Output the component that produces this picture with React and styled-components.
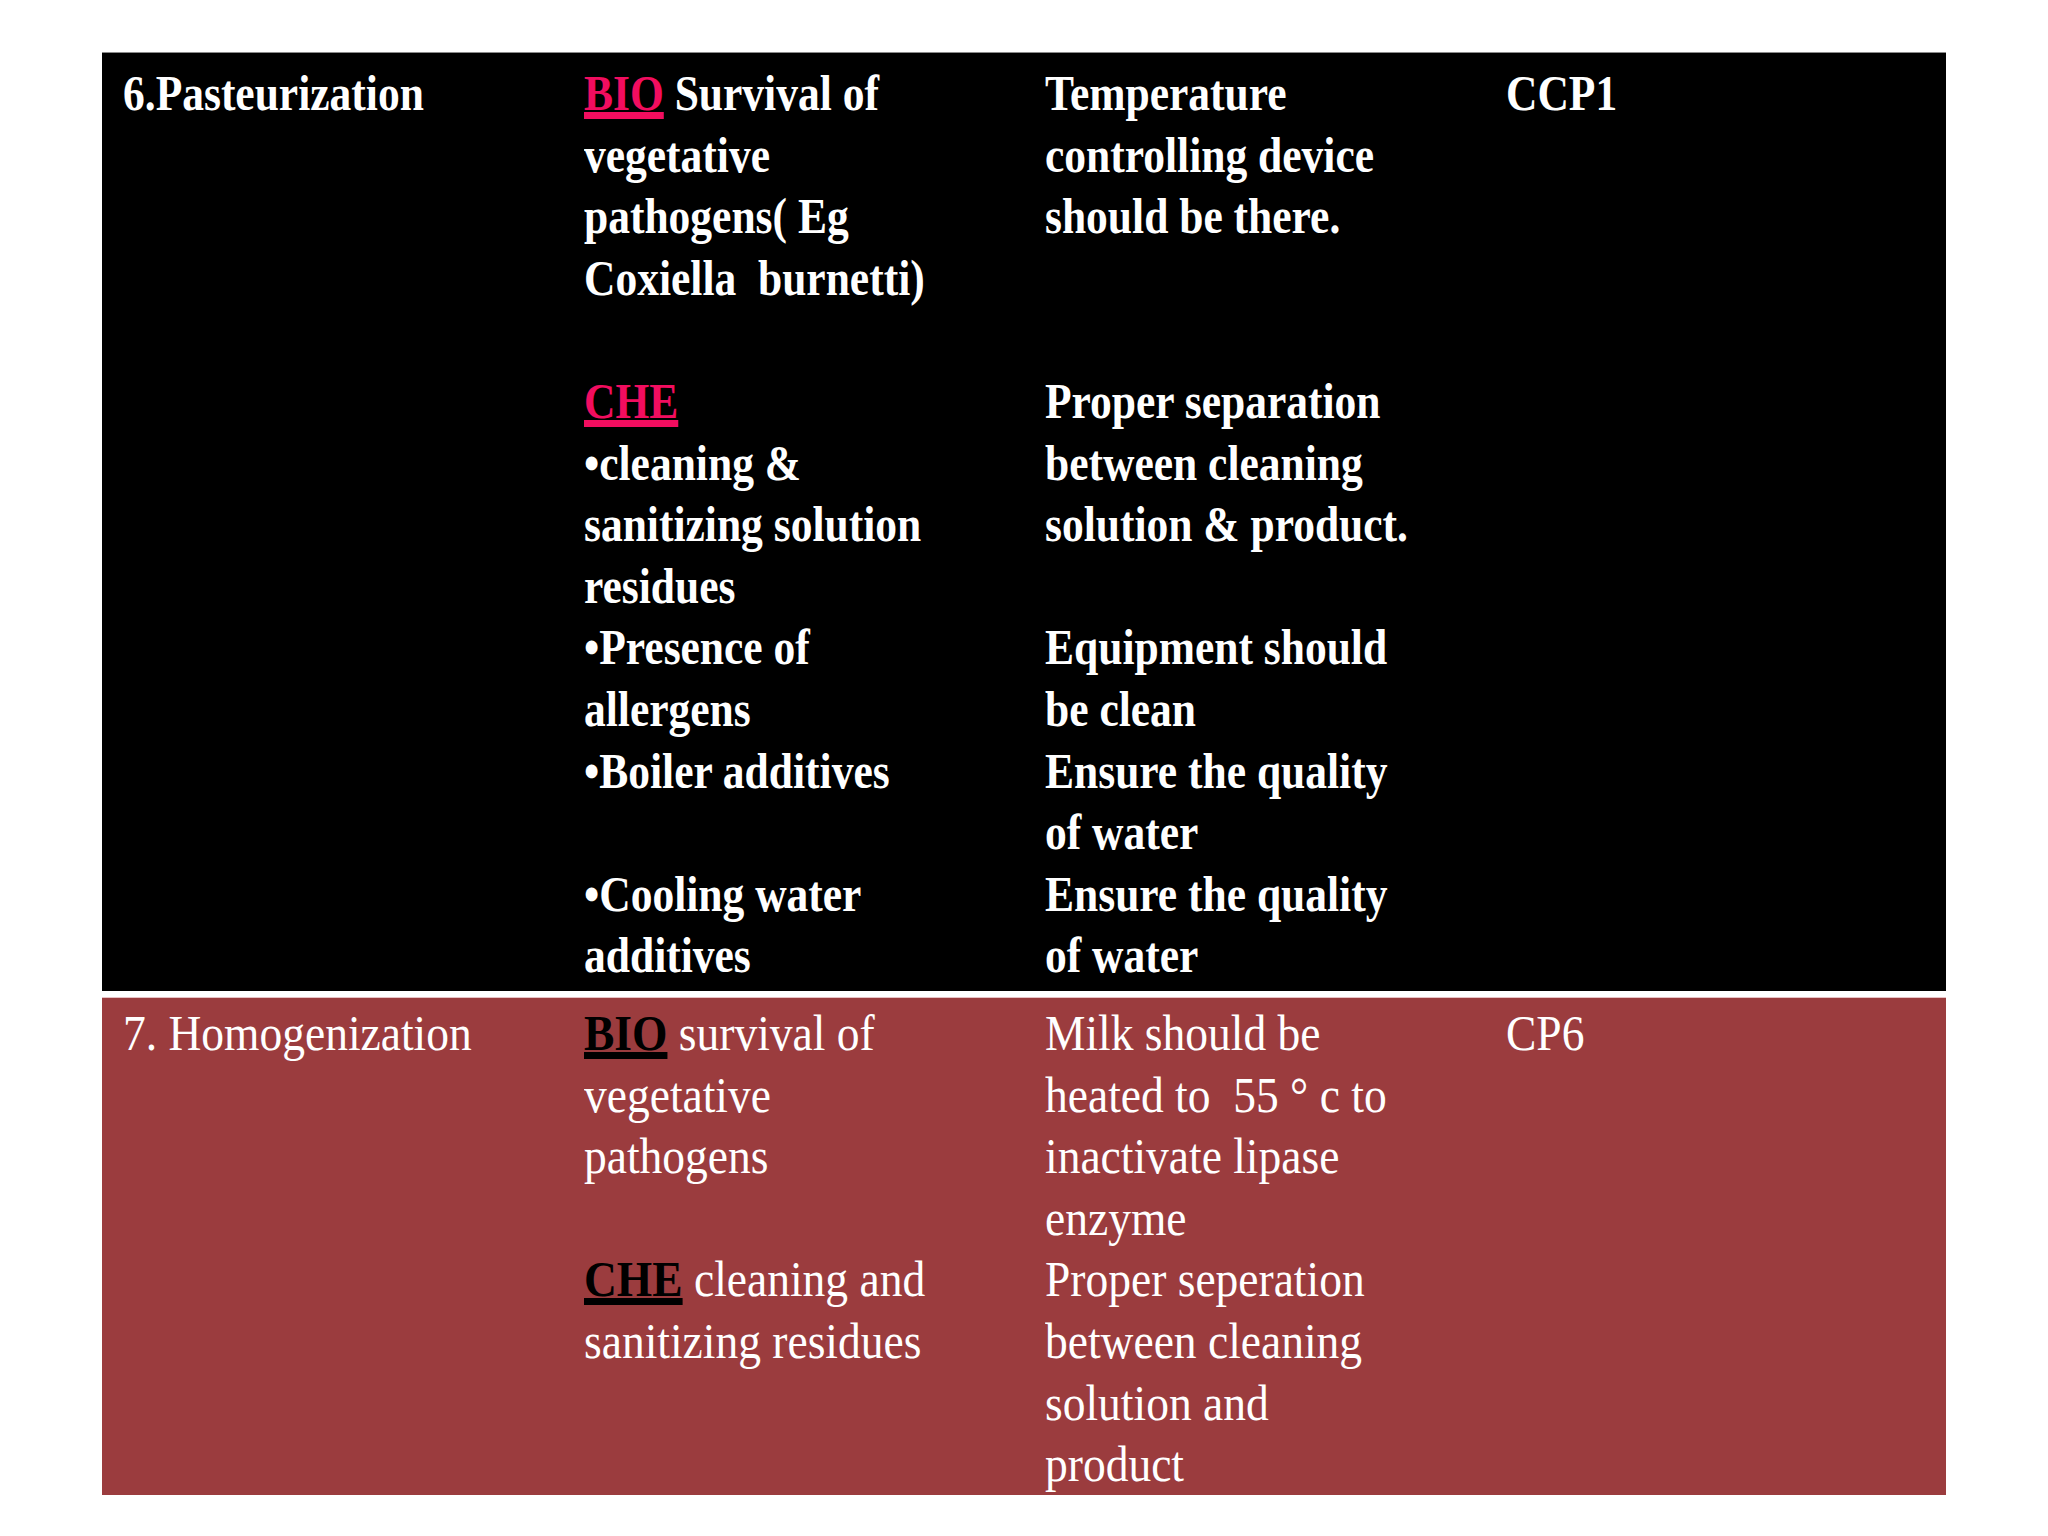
import React from 'react';
import styled, { createGlobalStyle } from 'styled-components';

const GlobalStyle = createGlobalStyle`
  html, body {
    margin: 0;
    padding: 0;
    background: #ffffff;
  }
`;

const TONES = {
  dark: { bg: '#000000', tag: '#f20d5f', weight: 700, squeeze: 0.87, border: '#8a8a8a' },
  red: { bg: '#9b3c3e', tag: '#000000', weight: 400, squeeze: 0.91, border: '#e7c3c5' },
};

const Page = styled.div`
  width: 2048px;
  height: 1536px;
  box-sizing: border-box;
  padding: 52px 0 0 102px;
  background: #ffffff;
  font-family: 'Liberation Serif', 'Times New Roman', serif;
`;

const Table = styled.div`
  width: 1844px;
  display: flex;
  flex-direction: column;
  gap: 6px;
`;

const Row = styled.div`
  display: grid;
  grid-template-columns: repeat(4, 461px);
  box-sizing: border-box;
  height: ${props => props.$height}px;
  padding-top: ${props => props.$padTop}px;
  background: ${props => TONES[props.$tone].bg};
  border-top: 1px solid ${props => TONES[props.$tone].border};
  color: #ffffff;
  font-size: 50px;
  line-height: 61.6px;
  font-weight: ${props => TONES[props.$tone].weight};
  overflow: hidden;
`;

const Cell = styled.div`
  padding-left: 21px;
  display: flex;
  flex-direction: column;
`;

const Line = styled.div`
  white-space: pre;
  height: 61.6px;
  flex-shrink: 0;
  transform: scaleX(${props => TONES[props.$tone].squeeze});
  transform-origin: left center;
`;

const Tag = styled.span`
  font-weight: 700;
  color: ${props => TONES[props.$tone].tag};
  text-decoration: underline;
  text-decoration-thickness: 7px;
  text-underline-offset: 2px;
`;

const Lines = ({ tone, lines }) => (
  <Cell>
    {lines.map((text, i) => (
      <Line key={i} $tone={tone}>
        {text}
      </Line>
    ))}
  </Cell>
);

const App = () => {
  const dark = 'dark';
  const red = 'red';
  return (
    <>
      <GlobalStyle />
      <Page>
        <Table>
          <Row $tone={dark} $height={939} $padTop={10}>
            <Lines tone={dark} lines={['6.Pasteurization']} />
            <Lines
              tone={dark}
              lines={[
                <>
                  <Tag $tone={dark}>BIO</Tag> Survival of
                </>,
                'vegetative',
                'pathogens( Eg',
                'Coxiella  burnetti)',
                ' ',
                <Tag $tone={dark}>CHE</Tag>,
                '•cleaning &',
                'sanitizing solution',
                'residues',
                '•Presence of',
                'allergens',
                '•Boiler additives',
                ' ',
                '•Cooling water',
                'additives',
              ]}
            />
            <Lines
              tone={dark}
              lines={[
                'Temperature',
                'controlling device',
                'should be there.',
                ' ',
                ' ',
                'Proper separation',
                'between cleaning',
                'solution & product.',
                ' ',
                'Equipment should',
                'be clean',
                'Ensure the quality',
                'of water',
                'Ensure the quality',
                'of water',
              ]}
            />
            <Lines tone={dark} lines={['CCP1']} />
          </Row>
          <Row $tone={red} $height={498} $padTop={5}>
            <Lines tone={red} lines={['7. Homogenization']} />
            <Lines
              tone={red}
              lines={[
                <>
                  <Tag $tone={red}>BIO</Tag> survival of
                </>,
                'vegetative',
                'pathogens',
                ' ',
                <>
                  <Tag $tone={red}>CHE</Tag> cleaning and
                </>,
                'sanitizing residues',
              ]}
            />
            <Lines
              tone={red}
              lines={[
                'Milk should be',
                'heated to  55 ° c to',
                'inactivate lipase',
                'enzyme',
                'Proper seperation',
                'between cleaning',
                'solution and',
                'product',
              ]}
            />
            <Lines tone={red} lines={['CP6']} />
          </Row>
        </Table>
      </Page>
    </>
  );
};

export default App;
